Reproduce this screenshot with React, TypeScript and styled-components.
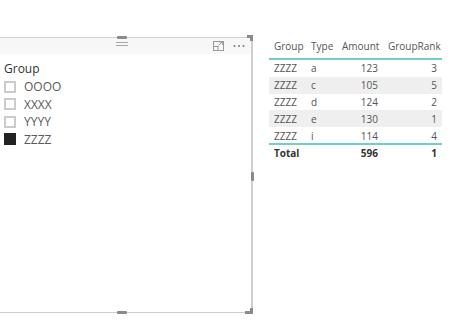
import React from "react";
import styled, { createGlobalStyle } from "styled-components";

const Global = createGlobalStyle`
  html, body { margin: 0; padding: 0; background: #ffffff; }
  body { font-family: "Open Sans", "Liberation Sans", sans-serif; }
`;

const Page = styled.div`
  display: flex;
  align-items: flex-start;
  width: 474px;
  height: 321px;
  overflow: hidden;
`;

const Slicer = styled.div`
  position: relative;
  box-sizing: border-box;
  width: 254px;
  height: 276px;
  margin-top: 37px;
  margin-left: -1px;
  border: 1px solid #cfcfcf;
  border-left: none;
  border-right-width: 2px;
  border-bottom-width: 1px;
  display: flex;
  flex-direction: column;
`;

const HeaderBand = styled.div`
  height: 16px;
  background: #f7f7f7;
  display: flex;
  align-items: center;
  justify-content: flex-end;
  gap: 9px;
  padding-right: 6px;
`;

const Grip = styled.div`
  position: absolute;
  left: 117px;
  top: 4px;
  width: 12px;
  height: 4px;
  border-top: 1px solid #a8a8a8;
  border-bottom: 1px solid #a8a8a8;
  box-sizing: border-box;
`;

const Handle = styled.div<{ $dir: "h" | "v" }>`
  position: absolute;
  background: #8a8a8a;
  border-radius: 1px;
  width: ${(p) => (p.$dir === "h" ? "10px" : "3px")};
  height: ${(p) => (p.$dir === "h" ? "3px" : "9px")};
`;

const TopHandle = styled(Handle)`
  left: 118px;
  top: -2px;
`;
const BottomHandle = styled(Handle)`
  left: 118px;
  bottom: -2px;
`;
const RightHandle = styled(Handle)`
  right: -3px;
  top: 134px;
`;

const Corner = styled.div<{ $pos: "tr" | "br" }>`
  position: absolute;
  right: -2px;
  width: 6px;
  height: 6px;
  box-sizing: border-box;
  border-right: 3px solid #8a8a8a;
  ${(p) =>
    p.$pos === "tr"
      ? "top: -3px; border-top: 3px solid #8a8a8a;"
      : "bottom: -2px; border-bottom: 3px solid #8a8a8a; width: 8px;"}
`;

const IconSvg = styled.svg`
  display: block;
`;

const SlicerBody = styled.div`
  padding: 6px 0 0 5px;
  display: flex;
  flex-direction: column;
`;

const Title = styled.div`
  font-size: 12px;
  color: #333333;
  line-height: 17px;
  margin-bottom: 1px;
`;

const Item = styled.div`
  display: flex;
  align-items: center;
  height: 17.5px;
  gap: 8px;
  font-size: 12px;
  color: #5a5a5a;
`;

const Box = styled.span<{ $checked?: boolean }>`
  box-sizing: border-box;
  width: 12px;
  height: 12px;
  border: ${(p) => (p.$checked ? "1px solid #222" : "2px solid #cbcbcb")};
  background: ${(p) => (p.$checked ? "#222222" : "#ffffff")};
`;

const TableWrap = styled.div`
  margin-left: 16px;
  margin-top: 36px;
  width: 173px;
  font-size: 10px;
  color: #555555;
`;

const Row = styled.div<{ $kind?: "head" | "odd" | "even" | "total" }>`
  display: grid;
  grid-template-columns: 37px 31px 46px 59px;
  align-items: center;
  box-sizing: border-box;
  height: ${(p) => (p.$kind === "head" ? "24px" : p.$kind === "total" ? "18px" : "16.8px")};
  padding-bottom: ${(p) => (p.$kind === "head" ? "3px" : "0")};
  background: ${(p) => (p.$kind === "even" ? "#efefef" : "transparent")};
  border-bottom: ${(p) => (p.$kind === "head" ? "2px solid #6fd0c6" : "none")};
  border-top: ${(p) => (p.$kind === "total" ? "2px solid #6fd0c6" : "none")};
  font-weight: ${(p) => (p.$kind === "total" ? 700 : 400)};
  color: ${(p) => (p.$kind === "total" ? "#333333" : "#555555")};
  margin-top: ${(p) => (p.$kind === "total" ? "-1px" : "0")};
`;

const Cell = styled.div<{ $right?: boolean }>`
  text-align: ${(p) => (p.$right ? "right" : "left")};
  padding: 0 5px;
  white-space: nowrap;
`;

const data = [
  ["ZZZZ", "a", "123", "3"],
  ["ZZZZ", "c", "105", "5"],
  ["ZZZZ", "d", "124", "2"],
  ["ZZZZ", "e", "130", "1"],
  ["ZZZZ", "i", "114", "4"],
];

export default function App() {
  return (
    <>
      <Global />
      <Page>
        <Slicer>
          <TopHandle $dir="h" />
          <BottomHandle $dir="h" />
          <RightHandle $dir="v" />
          <Corner $pos="tr" />
          <Corner $pos="br" />
          <HeaderBand>
            <Grip />
            <IconSvg width="11" height="10" viewBox="0 0 11 10">
              <rect x="0.5" y="0.5" width="10" height="9" fill="none" stroke="#9a9a9a" strokeWidth="1" />
              <rect x="0.5" y="5.5" width="4.5" height="4" fill="none" stroke="#9a9a9a" strokeWidth="1" />
              <path d="M5.5 4.5 L9 1 M6.5 1 H9.5 V4" fill="none" stroke="#9a9a9a" strokeWidth="1" />
            </IconSvg>
            <IconSvg width="12" height="4" viewBox="0 0 12 4">
              <circle cx="1.5" cy="2" r="1" fill="#777" />
              <circle cx="6" cy="2" r="1" fill="#777" />
              <circle cx="10.5" cy="2" r="1" fill="#777" />
            </IconSvg>
          </HeaderBand>
          <SlicerBody>
            <Title>Group</Title>
            <Item><Box />OOOO</Item>
            <Item><Box />XXXX</Item>
            <Item><Box />YYYY</Item>
            <Item><Box $checked />ZZZZ</Item>
          </SlicerBody>
        </Slicer>
        <TableWrap>
          <Row $kind="head">
            <Cell>Group</Cell>
            <Cell>Type</Cell>
            <Cell $right>Amount</Cell>
            <Cell $right>GroupRank</Cell>
          </Row>
          {data.map((r, i) => (
            <Row key={i} $kind={i % 2 === 0 ? "odd" : "even"}>
              <Cell>{r[0]}</Cell>
              <Cell>{r[1]}</Cell>
              <Cell $right>{r[2]}</Cell>
              <Cell $right>{r[3]}</Cell>
            </Row>
          ))}
          <Row $kind="total">
            <Cell>Total</Cell>
            <Cell />
            <Cell $right>596</Cell>
            <Cell $right>1</Cell>
          </Row>
        </TableWrap>
      </Page>
    </>
  );
}
